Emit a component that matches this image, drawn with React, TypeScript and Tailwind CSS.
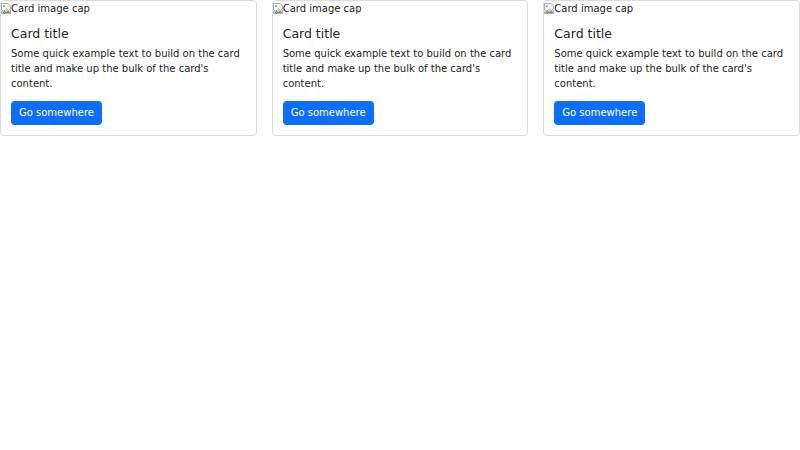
import React from 'react';

// Broken image placeholder glyph, like the browser draws for a missing src
function BrokenImage() {
  return (
    <svg width="10" height="11" viewBox="0 0 10 11" className="shrink-0 mt-[2px]">
      <path d="M0.5 0.5 H7 L9.5 3 V6 L7.5 7.5 L5.5 6 L3 8 L0.5 7 Z" fill="#f3f3f3" stroke="#9a9a9a" strokeWidth="0.8" />
      <path d="M0.5 8.5 L3 9.5 L5.5 7.5 L7.5 9 L9.5 7.5 V10.5 H0.5 Z" fill="#f3f3f3" stroke="#9a9a9a" strokeWidth="0.8" />
      <path d="M1 10 L3.5 7.8 L5 9 L7 7.8 L9 9.5 V10 Z" fill="#5aa35a" />
      <circle cx="3" cy="3.2" r="1" fill="#6fa8dc" />
    </svg>
  );
}

function Card() {
  return (
    <div className="flex flex-col bg-white border border-[#dcdcdc] rounded-[4px] overflow-hidden">
      <div className="flex items-start h-[15px] text-[10px] leading-[15px] text-[#212529]">
        <BrokenImage />
        <span>Card image cap</span>
      </div>
      <div className="p-[10px]">
        <h5 className="text-[12.5px] leading-[15px] font-medium text-[#212529] mb-[5px]">Card title</h5>
        <p className="text-[10px] leading-[15px] text-[#212529] mb-[8px]">
          Some quick example text to build on the card title and make up the bulk of the card's content.
        </p>
        <a
          href="#"
          className="inline-block bg-[#0d6efd] text-white text-[10px] leading-[15px] px-[8px] py-[4.5px] rounded-[4px]"
        >
          Go somewhere
        </a>
      </div>
    </div>
  );
}

export default function App() {
  return (
    <div className="w-[800px] h-[450px] bg-white font-['DejaVu_Sans',sans-serif]">
      <div className="grid grid-cols-3 gap-[15px] items-start">
        <Card />
        <Card />
        <Card />
      </div>
    </div>
  );
}
